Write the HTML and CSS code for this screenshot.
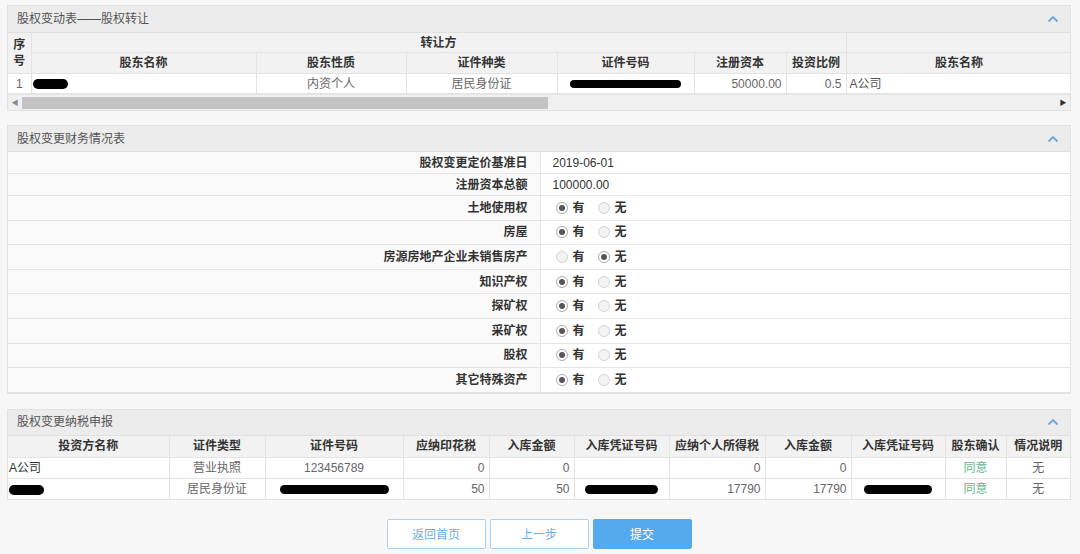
FILE: index.html
```html
<!DOCTYPE html>
<html lang="zh-CN">
<head>
  <meta charset="UTF-8">
  <title>股权转让</title>
  <link rel="stylesheet" href="styles.css">
</head>
<body>
  <section class="panel p1">
    <div class="panel-head">
      <span>股权变动表——股权转让</span>
      <svg class="chev" width="12" height="8" viewBox="0 0 12 8"><polyline points="1.5,6.5 6,2 10.5,6.5" fill="none" stroke="#6ea6d8" stroke-width="1.8"/></svg>
    </div>
    <div class="scroll-wrap">
      <table class="grid t1">
        <colgroup>
          <col style="width:23px"><col style="width:225px"><col style="width:150px"><col style="width:151px">
          <col style="width:137px"><col style="width:92px"><col style="width:60px"><col style="width:226px">
        </colgroup>
        <tr class="h1">
          <th rowspan="2" class="seq">序<br>号</th>
          <th colspan="6">转让方</th>
          <th></th>
        </tr>
        <tr class="h2">
          <th>股东名称</th><th>股东性质</th><th>证件种类</th><th>证件号码</th><th>注册资本</th><th>投资比例</th><th>股东名称</th>
        </tr>
        <tr class="d">
          <td class="c">1</td>
          <td class="l"><span class="redact" style="width:35px"></span></td>
          <td class="c">内资个人</td>
          <td class="c">居民身份证</td>
          <td class="c"><span class="redact" style="width:111px;height:8px"></span></td>
          <td class="r">50000.00</td>
          <td class="r">0.5</td>
          <td class="dark">A公司</td>
        </tr>
      </table>
    </div>
    <div class="fake-scroll">
      <span class="arr">&#9664;</span>
      <div class="track"><div class="thumb"></div></div>
      <span class="arr">&#9654;</span>
    </div>
  </section>

  <section class="panel p2">
    <div class="panel-head">
      <span>股权变更财务情况表</span>
      <svg class="chev" width="12" height="8" viewBox="0 0 12 8"><polyline points="1.5,6.5 6,2 10.5,6.5" fill="none" stroke="#6ea6d8" stroke-width="1.8"/></svg>
    </div>
    <table class="form-grid">
      <tr class="short"><th>股权变更定价基准日</th><td>2019-06-01</td></tr>
      <tr class="short"><th>注册资本总额</th><td>100000.00</td></tr>
      <tr><th>土地使用权</th><td><span class="radio on"></span><b>有</b><span class="radio"></span><b>无</b></td></tr>
      <tr><th>房屋</th><td><span class="radio on"></span><b>有</b><span class="radio"></span><b>无</b></td></tr>
      <tr><th>房源房地产企业未销售房产</th><td><span class="radio"></span><b>有</b><span class="radio on"></span><b>无</b></td></tr>
      <tr><th>知识产权</th><td><span class="radio on"></span><b>有</b><span class="radio"></span><b>无</b></td></tr>
      <tr><th>探矿权</th><td><span class="radio on"></span><b>有</b><span class="radio"></span><b>无</b></td></tr>
      <tr><th>采矿权</th><td><span class="radio on"></span><b>有</b><span class="radio"></span><b>无</b></td></tr>
      <tr><th>股权</th><td><span class="radio on"></span><b>有</b><span class="radio"></span><b>无</b></td></tr>
      <tr><th>其它特殊资产</th><td><span class="radio on"></span><b>有</b><span class="radio"></span><b>无</b></td></tr>
    </table>
  </section>

  <section class="panel p3">
    <div class="panel-head">
      <span>股权变更纳税申报</span>
      <svg class="chev" width="12" height="8" viewBox="0 0 12 8"><polyline points="1.5,6.5 6,2 10.5,6.5" fill="none" stroke="#6ea6d8" stroke-width="1.8"/></svg>
    </div>
    <table class="grid t3">
      <colgroup>
        <col style="width:161px"><col style="width:96px"><col style="width:138px"><col style="width:86px">
        <col style="width:85px"><col style="width:95px"><col style="width:96px"><col style="width:86px">
        <col style="width:94px"><col style="width:61px"><col>
      </colgroup>
      <tr class="h2">
        <th>投资方名称</th><th>证件类型</th><th>证件号码</th><th>应纳印花税</th><th>入库金额</th><th>入库凭证号码</th>
        <th>应纳个人所得税</th><th>入库金额</th><th>入库凭证号码</th><th>股东确认</th><th>情况说明</th>
      </tr>
      <tr class="d">
        <td class="l">A公司</td><td class="c">营业执照</td><td class="c">123456789</td>
        <td class="r">0</td><td class="r">0</td><td></td>
        <td class="r">0</td><td class="r">0</td><td></td>
        <td class="c ok">同意</td><td class="c">无</td>
      </tr>
      <tr class="d">
        <td class="l"><span class="redact" style="width:35px"></span></td><td class="c">居民身份证</td>
        <td class="c"><span class="redact" style="width:109px;height:9px"></span></td>
        <td class="r">50</td><td class="r">50</td>
        <td class="c"><span class="redact" style="width:73px;height:9px"></span></td>
        <td class="r">17790</td><td class="r">17790</td>
        <td class="c"><span class="redact" style="width:68px;height:9px"></span></td>
        <td class="c ok">同意</td><td class="c">无</td>
      </tr>
    </table>
  </section>

  <div class="actions">
    <button class="btn ghost">返回首页</button>
    <button class="btn ghost">上一步</button>
    <button class="btn primary">提交</button>
  </div>
</body>
</html>
```

FILE: styles.css
```css
body { margin: 0; padding: 5px 9px 0 7px; background: #f7f7f7; font-family: "Liberation Sans", "Noto Sans CJK SC", sans-serif; font-size: 12px; line-height: 16px; color: #333; }
.panel { background: #fff; border: 1px solid #e2e2e2; }
.p1 { height: 104px; overflow: hidden; }
.p2 { margin-top: 14px; }
.p3 { margin-top: 15px; }
.panel-head { height: 25px; display: flex; align-items: center; justify-content: space-between; padding: 0 9px 0 9px; background: #ececec; border-bottom: 1px solid #e0e0e0; color: #555; }
.p1 .panel-head { height: 26px; }
.chev { margin-right: 2px; }

.grid { border-collapse: collapse; table-layout: fixed; }
.grid th, .grid td { border: 1px solid #e3e3e3; padding: 0 4px; white-space: nowrap; overflow: hidden; }
.grid th { background: #f2f2f2; font-weight: bold; color: #333; text-align: center; }
.grid td { color: #666; }
.grid .c { text-align: center; }
.grid .r { text-align: right; }
.grid .l { text-align: left; padding-left: 1px; color: #333; }
.grid .dark { color: #555; padding-left: 3px; }
.grid .ok { color: #5cb88a; }
.grid tr:first-child th { border-top: 0; }
.grid tr > :first-child { border-left: 0; }

.scroll-wrap { overflow: hidden; }
.t1 { width: 1064px; }
.t1 .h1 th { height: 19px; }
.t1 .h2 th { height: 20px; }
.t1 .d td { height: 19px; }
.t1 .seq { line-height: 16px; padding: 0; }

.fake-scroll { height: 16px; display: flex; align-items: center; background: #f0f0f0; border-top: 1px solid #e6e6e6; }
.arr { width: 14px; font-size: 7px; color: #888; text-align: center; }
.fake-scroll .arr:last-child { color: #333; }
.track { flex: 1; height: 12px; }
.thumb { width: 526px; height: 12px; background: #c3c3c3; }

.form-grid { width: 100%; border-collapse: collapse; }
.form-grid th, .form-grid td { height: 23.6px; border-bottom: 1px solid #e4e4e4; padding: 0; }
.form-grid tr.short th, .form-grid tr.short td { height: 21px; }
.form-grid th { width: 532px; text-align: right; padding-right: 12px; box-sizing: border-box; font-weight: bold; background: #fafafa; border-right: 1px solid #e4e4e4; }
.form-grid td { padding-left: 12px; color: #333; }
.form-grid b { font-weight: bold; margin-right: 10px; }
.radio { display: inline-block; width: 10px; height: 10px; border: 1px solid #d4d4d4; border-radius: 50%; background: #f3f3f3; vertical-align: -2px; margin: 0 5px 0 3px; position: relative; }
.radio.on { border-color: #aaa; background: #fff; }
.radio.on::after { content: ""; position: absolute; left: 2px; top: 2px; width: 6px; height: 6px; border-radius: 50%; background: #555; }

.t3 { width: 100%; }
.t3 .h2 th { height: 21px; }
.t3 .d td { height: 20px; }
.t3 th:last-child, .t3 td:last-child { border-right: 0; }
.t3 tr:last-child td { border-bottom: 0; }

.redact { display: inline-block; width: 40px; height: 10px; background: #000; border-radius: 5px; vertical-align: middle; }

.actions { display: flex; justify-content: center; gap: 4px; margin-top: 19px; }
.btn { width: 99px; height: 30px; font-family: inherit; font-size: 12px; border-radius: 2px; cursor: pointer; }
.ghost { background: #fff; border: 1px solid #a9d3f5; color: #6aaee8; }
.primary { background: #55aaee; border: 1px solid #55aaee; color: #fff; }
```
